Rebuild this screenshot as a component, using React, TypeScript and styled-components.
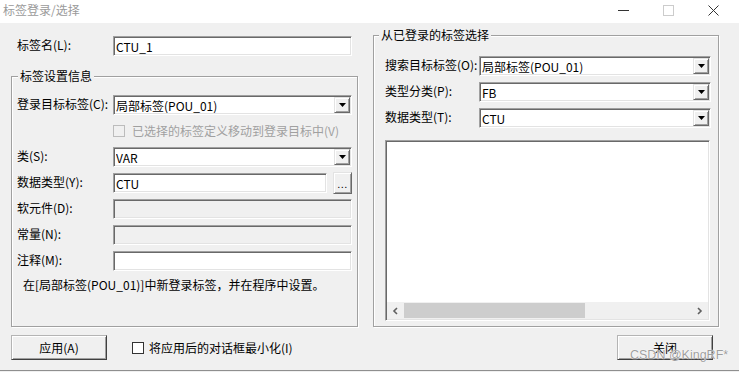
import React from 'react';
import styled, { createGlobalStyle } from 'styled-components';

const Global = createGlobalStyle`
  html, body { margin: 0; padding: 0; background: #f0f0f0; }
  body {
    font-family: "Noto Sans CJK SC", "Liberation Sans", sans-serif;
    font-size: 12px;
    color: #000;
  }
  * { box-sizing: border-box; }
`;

const Window = styled.div`
  position: relative;
  width: 739px;
  height: 371px;
  display: flex;
  flex-direction: column;
  background: #f0f0f0;
  border-bottom: 1px solid #8f8f8f;
  overflow: hidden;
`;

const TitleBar = styled.div`
  height: 23px;
  flex-shrink: 0;
  background: #fff;
  display: flex;
  align-items: center;
  padding: 0 3px 0 3px;
`;

const Title = styled.div`
  flex: 1;
  color: #9a9a9a;
  font-size: 12px;
  line-height: 16px;
  margin-top: -3px;
`;

const CtrlButton = styled.div`
  width: 45px;
  height: 23px;
  display: flex;
  align-items: center;
  justify-content: center;
  margin-top: -3px;
`;

const Body = styled.div`
  flex: 1;
  display: grid;
  grid-template-columns: 347px 346px;
  grid-template-rows: 292px 25px;
  column-gap: 15px;
  row-gap: 8px;
  padding: 12px 0 0 11px;
`;

const Column = styled.div`
  display: flex;
  flex-direction: column;
`;

const NameRow = styled.div`
  display: grid;
  grid-template-columns: 96px 1fr;
  align-items: center;
  height: 20px;
  margin: 1px 6px 0 6px;
`;

const GroupBox = styled.div<{ $h: number; $pl: number; $pr: number; $mt: number }>`
  display: flex;
  flex-direction: column;
  height: ${p => p.$h}px;
  margin-top: ${p => p.$mt}px;
  padding: 0 ${p => p.$pr}px 5px ${p => p.$pl}px;
  border: 1px solid #a0a0a0;
  box-shadow: inset 1px 1px 0 #fff, 1px 1px 0 #fff;
`;

const Legend = styled.div<{ $ml: number }>`
  align-self: flex-start;
  height: 16px;
  line-height: 16px;
  margin: -9px 0 0 ${p => p.$ml}px;
  padding: 0 2px;
  background: #f0f0f0;
`;

const FormGrid = styled.div<{ $labelW: number; $mt: number }>`
  display: grid;
  grid-template-columns: ${p => p.$labelW}px 1fr;
  grid-auto-rows: 20px;
  row-gap: 6px;
  align-items: center;
  margin-top: ${p => p.$mt}px;
`;

const Label = styled.div`
  line-height: 14px;
  white-space: nowrap;
  margin-top: -2px;
`;

const Field = styled.div<{ $disabled?: boolean }>`
  height: 20px;
  min-width: 0;
  flex: 1;
  display: flex;
  align-items: center;
  padding-left: 2px;
  line-height: 14px;
  background: ${p => (p.$disabled ? '#f0f0f0' : '#fff')};
  border: 1px solid;
  border-color: #a0a0a0 #fff #fff #a0a0a0;
  box-shadow: inset 1px 1px 0 #696969, inset -1px -1px 0 #e3e3e3;
`;

const FieldText = styled.span`
  flex: 1;
  white-space: nowrap;
  overflow: hidden;
  padding-top: 1px;
`;

const DropButton = styled.div`
  width: 16px;
  align-self: stretch;
  margin: 1px 1px 1px 0;
  display: flex;
  align-items: center;
  justify-content: center;
  background: #f0f0f0;
  border: 1px solid;
  border-color: #e3e3e3 #696969 #696969 #e3e3e3;
  box-shadow: inset 1px 1px 0 #fff, inset -1px -1px 0 #a0a0a0;
`;

const InlineRow = styled.div`
  display: flex;
  align-items: center;
  gap: 6px;
`;

const SmallButton = styled.div`
  width: 19px;
  height: 22px;
  display: flex;
  align-items: flex-end;
  justify-content: center;
  padding-bottom: 5px;
  background: #f0f0f0;
  border: 1px solid;
  border-color: #e3e3e3 #696969 #696969 #e3e3e3;
  box-shadow: inset 1px 1px 0 #fff, inset -1px -1px 0 #a0a0a0;
  font-family: "Liberation Sans", sans-serif;
  font-size: 11px;
  line-height: 8px;
  letter-spacing: 0.5px;
`;

const CheckRow = styled.div<{ $disabled?: boolean; $gap: number }>`
  display: flex;
  align-items: center;
  gap: ${p => p.$gap}px;
  color: ${p => (p.$disabled ? '#a0a0a0' : '#000')};
  line-height: 14px;
  white-space: nowrap;
`;

const CheckBox = styled.div<{ $disabled?: boolean }>`
  width: 12px;
  height: 12px;
  flex-shrink: 0;
  background: ${p => (p.$disabled ? '#f0f0f0' : '#fff')};
  border: 1px solid ${p => (p.$disabled ? '#bcbcbc' : '#333')};
`;

const Note = styled.div`
  margin: 7px 0 0 6px;
  line-height: 14px;
  white-space: nowrap;
`;

const ListBox = styled.div`
  flex: 1;
  margin: 12px 1px 0 0;
  display: flex;
  flex-direction: column;
  background: #fff;
  border: 1px solid;
  border-color: #a0a0a0 #fff #fff #a0a0a0;
  box-shadow: inset 1px 1px 0 #696969, inset -1px -1px 0 #e3e3e3;
  padding: 1px 1px 1px 1px;
`;

const ListArea = styled.div`
  flex: 1;
`;

const HScroll = styled.div`
  height: 17px;
  display: flex;
  align-items: stretch;
  background: #f0f0f0;
`;

const ScrollArrow = styled.div`
  width: 17px;
  display: flex;
  align-items: center;
  justify-content: center;
`;

const Track = styled.div`
  flex: 1;
  display: flex;
  align-items: center;
`;

const Thumb = styled.div`
  height: 15px;
  background: #cdcdcd;
`;

const ButtonRow = styled.div<{ $end?: boolean }>`
  display: flex;
  align-items: center;
  justify-content: ${p => (p.$end ? 'flex-end' : 'flex-start')};
  gap: 25px;
  padding-right: ${p => (p.$end ? 6 : 0)}px;
`;

const PushButton = styled.div`
  width: 96px;
  height: 25px;
  display: flex;
  align-items: center;
  justify-content: center;
  background: #f0f0f0;
  border: 1px solid;
  border-color: #b4b4b4 #404040 #404040 #b4b4b4;
  box-shadow: inset 1px 1px 0 #fff, inset -1px -1px 0 #a0a0a0;
  line-height: 14px;
`;

const Watermark = styled.div`
  position: absolute;
  left: 630px;
  top: 347px;
  font-family: "Liberation Sans", sans-serif;
  font-size: 12.5px;
  line-height: 16px;
  color: rgba(140, 140, 140, 0.85);
  text-shadow: 0 0 1px #fff, 0 0 1px #fff;
  white-space: nowrap;
`;

const Arrow = () => (
  <svg width="7" height="4" viewBox="0 0 7 4">
    <path d="M0 0h7L3.5 4z" fill="#000" />
  </svg>
);

const Select: React.FC<{ value: string }> = ({ value }) => (
  <Field>
    <FieldText>{value}</FieldText>
    <DropButton>
      <Arrow />
    </DropButton>
  </Field>
);

const Chevron: React.FC<{ dir: 'left' | 'right' }> = ({ dir }) => (
  <svg width="7" height="8" viewBox="0 0 7 8">
    <path
      d={dir === 'left' ? 'M5 1 L2 4 L5 7' : 'M2 1 L5 4 L2 7'}
      fill="none"
      stroke="#606060"
      strokeWidth="1.6"
    />
  </svg>
);

export default function App() {
  return (
    <>
      <Global />
      <Window>
        <TitleBar>
          <Title>标签登录/选择</Title>
          <CtrlButton>
            <svg width="11" height="1" viewBox="0 0 11 1">
              <rect width="11" height="1" fill="#333" />
            </svg>
          </CtrlButton>
          <CtrlButton>
            <svg width="11" height="11" viewBox="0 0 11 11">
              <rect x="0.5" y="0.5" width="10" height="10" fill="none" stroke="#cccccc" />
            </svg>
          </CtrlButton>
          <CtrlButton>
            <svg width="11" height="11" viewBox="0 0 11 11">
              <path d="M0.5 0.5 L10.5 10.5 M10.5 0.5 L0.5 10.5" stroke="#333" strokeWidth="1" />
            </svg>
          </CtrlButton>
        </TitleBar>
        <Body>
          <Column>
            <NameRow>
              <Label>标签名(L):</Label>
              <Field>
                <FieldText>CTU_1</FieldText>
              </Field>
            </NameRow>
            <GroupBox $h={251} $pl={5} $pr={5} $mt={20}>
              <Legend $ml={1}>标签设置信息</Legend>
              <FormGrid $labelW={96} $mt={11}>
                <Label>登录目标标签(C):</Label>
                <Select value="局部标签(POU_01)" />
                <span />
                <CheckRow $disabled $gap={7}>
                  <CheckBox $disabled />
                  已选择的标签定义移动到登录目标中(V)
                </CheckRow>
                <Label>类(S):</Label>
                <Select value="VAR" />
                <Label>数据类型(Y):</Label>
                <InlineRow>
                  <Field>
                    <FieldText>CTU</FieldText>
                  </Field>
                  <SmallButton>...</SmallButton>
                </InlineRow>
                <Label>软元件(D):</Label>
                <Field $disabled />
                <Label>常量(N):</Label>
                <Field $disabled />
                <Label>注释(M):</Label>
                <Field />
              </FormGrid>
              <Note>在[局部标签(POU_01)]中新登录标签，并在程序中设置。</Note>
            </GroupBox>
          </Column>
          <Column>
            <GroupBox $h={292} $pl={11} $pr={7} $mt={0}>
              <Legend $ml={-6}>从已登录的标签选择</Legend>
              <FormGrid $labelW={94} $mt={13}>
                <Label>搜索目标标签(O):</Label>
                <Select value="局部标签(POU_01)" />
                <Label>类型分类(P):</Label>
                <Select value="FB" />
                <Label>数据类型(T):</Label>
                <Select value="CTU" />
              </FormGrid>
              <ListBox>
                <ListArea />
                <HScroll>
                  <ScrollArrow>
                    <Chevron dir="left" />
                  </ScrollArrow>
                  <Track>
                    <Thumb style={{ width: '181px' }} />
                  </Track>
                  <ScrollArrow>
                    <Chevron dir="right" />
                  </ScrollArrow>
                </HScroll>
              </ListBox>
            </GroupBox>
          </Column>
          <ButtonRow>
            <PushButton>应用(A)</PushButton>
            <CheckRow $gap={5}>
              <CheckBox />
              将应用后的对话框最小化(I)
            </CheckRow>
          </ButtonRow>
          <ButtonRow $end>
            <PushButton>关闭</PushButton>
          </ButtonRow>
        </Body>
        <Watermark>CSDN @KingRF*</Watermark>
      </Window>
    </>
  );
}
